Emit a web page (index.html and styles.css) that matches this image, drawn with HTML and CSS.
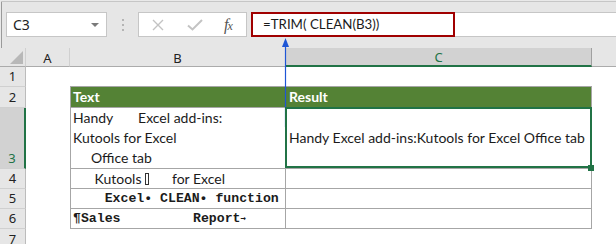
FILE: index.html
```html
<!DOCTYPE html>
<html>
<head>
<meta charset="utf-8">
<link rel="stylesheet" href="styles.css">
</head>
<body>
<div class="app">
  <div class="toolbar">
    <div class="namebox"><span>C3</span><span class="caret"></span></div>
    <div class="grip"><i></i><i></i><i></i></div>
    <div class="btns">
      <svg class="ico-x" width="12" height="12" viewBox="0 0 12 12"><path d="M1 1L11 11M11 1L1 11" stroke="#c3c3c3" stroke-width="1.4" fill="none"/></svg>
      <svg class="ico-ok" width="16" height="12" viewBox="0 0 16 12"><path d="M1 6.5L5.5 10.5L15 1" stroke="#c3c3c3" stroke-width="2" fill="none"/></svg>
      <span class="fx">f<span class="fx-x">x</span></span>
    </div>
    <div class="formula"><div class="hl">=TRIM( CLEAN(B3))</div></div>
  </div>

  <div class="sheet">
    <div class="corner"></div>
    <div class="colh">A</div>
    <div class="colh">B</div>
    <div class="colh colh-sel">C</div>
    <div class="colh colh-end"></div>

    <div class="rowh">1</div>
    <div class="cell"></div>
    <div class="cell tb-top"></div>
    <div class="cell tb-top"></div>
    <div class="cell"></div>

    <div class="rowh">2</div>
    <div class="cell"></div>
    <div class="cell tb tb-l head">Text</div>
    <div class="cell tb head">Result</div>
    <div class="cell"></div>

    <div class="rowh rowh-sel">3</div>
    <div class="cell"></div>
    <div class="cell tb tb-l multi"><span class="ln">Handy       Excel add-ins:</span><span class="ln">Kutools for Excel</span><span class="ln">     Office tab</span></div>
    <div class="cell tb sel">Handy Excel add-ins:Kutools for Excel Office tab</div>
    <div class="cell"></div>

    <div class="rowh">4</div>
    <div class="cell"></div>
    <div class="cell tb tb-l">      Kutools<span class="tofu"></span>      for Excel</div>
    <div class="cell tb"></div>
    <div class="cell"></div>

    <div class="rowh">5</div>
    <div class="cell"></div>
    <div class="cell tb tb-l mono">    Excel• CLEAN• function</div>
    <div class="cell tb"></div>
    <div class="cell"></div>

    <div class="rowh">6</div>
    <div class="cell"></div>
    <div class="cell tb tb-l mono"><span class="tabbed">¶Sales</span>Report<span class="arr">→</span></div>
    <div class="cell tb"></div>
    <div class="cell"></div>

    <div class="rowh rowh-last">7</div>
    <div class="cell"></div>
    <div class="cell"></div>
    <div class="cell"></div>
    <div class="cell"></div>
  </div>

  <svg class="arrow" width="12" height="92" viewBox="0 0 12 92">
    <path d="M5.5 6V90" stroke="#1f56d6" stroke-width="1.2" fill="none"/>
    <path d="M5.5 1L9 10H2Z" fill="#1f56d6"/>
  </svg>
</div>
</body>
</html>
```

FILE: styles.css
```css
* { box-sizing: border-box; margin: 0; padding: 0; }
html, body { width: 616px; height: 244px; overflow: hidden; background: #fff; }
body { font-family: "Lato", "Noto Sans", sans-serif; color: #1b1b1b; }

.app { position: relative; width: 616px; height: 244px; }

/* ---------- toolbar / formula bar ---------- */
.toolbar {
  height: 48px;
  background: #e6e6e6;
  border-top: 1px solid #e9e9e9;
  border-left: 1px solid #e9e9e9;
  box-shadow: inset 0 1px #c6c6c6, inset 1px 0 #9a9a9a;
  padding: 11px 0 0 5px;
  display: flex;
  align-items: flex-start;
}
.namebox {
  width: 101px; height: 25px;
  background: #fff;
  border: 1px solid #c6c6c6;
  display: flex; align-items: center;
  padding-left: 6px;
  font-family: "Noto Sans", sans-serif;
  font-size: 14px;
  color: #222;
}
.caret {
  margin-left: auto; margin-right: 7px;
  width: 0; height: 0;
  border-left: 4px solid transparent;
  border-right: 4px solid transparent;
  border-top: 4px solid #7a7a7a;
}
.grip {
  width: 31px; height: 25px;
  display: flex; flex-direction: column; align-items: center; justify-content: center;
  gap: 3px;
}
.grip i { display: block; width: 2px; height: 2px; background: #b4b4b4; }
.btns {
  width: 109px; height: 25px;
  background: #fff;
  border: 1px solid #c6c6c6;
  display: flex; align-items: center;
  padding-left: 13px;
  margin-right: 4px;
}
.ico-ok { margin-left: 23px; }
.fx {
  margin-left: 21px;
  font-family: "Liberation Serif", serif;
  font-style: italic;
  font-size: 16px;
  color: #555;
  letter-spacing: -1px;
}
.fx-x { font-size: 12px; }
.formula {
  flex: 1; height: 25px;
  background: #fff;
  box-shadow: inset 0 1px #c6c6c6, inset 0 -1px #c6c6c6;
}
.hl {
  width: 204px; height: 25px;
  border: 2px solid #a00000;
  padding-left: 10px;
  font-size: 13.3px;
  line-height: 21px;
  color: #1b1b1b;
  white-space: pre;
}

/* ---------- sheet ---------- */
.sheet {
  display: grid;
  grid-template-columns: 26px 44px 216px 306px 24px;
  grid-template-rows: 19px 20px 21px 61px 20px 20px 20px 20px;
}
.corner {
  background: #e6e6e6;
  border-right: 1px solid #d0d0d0;
  border-bottom: 1px solid #ababab;
  position: relative;
}
.corner::after {
  content: "";
  position: absolute;
  right: 2px; bottom: 2px;
  width: 13px; height: 13px;
  background: #b8b8b8;
  clip-path: polygon(100% 0, 100% 100%, 0 100%);
}
.colh {
  background: #e6e6e6;
  border-right: 1px solid #d0d0d0;
  border-bottom: 1px solid #ababab;
  font-family: "Noto Sans", sans-serif;
  font-size: 13px;
  color: #222;
  display: flex; align-items: center; justify-content: center;
  padding-top: 1px;
}
.colh-sel {
  background: #d2d2d2;
  color: #217346;
  border-right: 1px solid #a0a0a0;
  border-bottom: 2px solid #217346;
}
.colh-end { border-right: none; }
.rowh {
  background: #e6e6e6;
  border-right: 1px solid #bcbcbc;
  border-bottom: 1px solid #d0d0d0;
  font-family: "Noto Sans", sans-serif;
  font-size: 13px;
  color: #222;
  display: flex; align-items: flex-end; justify-content: center;
  line-height: 19px;
}
.rowh-sel {
  background: #d2d2d2;
  color: #217346;
  border-right: 2px solid #217346;
}
.rowh-last { align-items: flex-start; line-height: 16px; padding-top: 2px; }

.cell {
  background: #fff;
  font-size: 14px;
  line-height: 20px;
  white-space: pre;
  padding-left: 3px;
  display: flex; align-items: center;
}
.tb-top { border-bottom: 1px solid #a6a6a6; }
.tb { border-right: 1px solid #a6a6a6; border-bottom: 1px solid #a6a6a6; }
.tb-l { border-left: 1px solid #a6a6a6; padding-left: 2px; }
.head {
  background: #548235;
  color: #fff;
  font-weight: 700;
}
.multi {
  flex-direction: column;
  align-items: flex-start;
  justify-content: flex-end;
}
.ln { display: block; line-height: 20px; }
.sel { position: relative; }
.sel::after {
  content: "";
  position: absolute;
  left: -1px; top: -1px; right: -1px; bottom: 0;
  border: 2px solid #217346;
  z-index: 2;
}
.sel::before {
  content: "";
  position: absolute;
  right: -3px; bottom: -3px;
  width: 6px; height: 6px;
  background: #217346;
  z-index: 3;
}
.tofu {
  display: inline-block;
  width: 4px; height: 12px;
  border: 1px solid #333;
  margin-left: 4px;
  margin-right: 1px;
}
.mono {
  font-family: "Liberation Mono", monospace;
  font-weight: 700;
  font-size: 13.2px;
}
.tabbed { display: inline-block; width: 120px; }
.arr { font-family: "DejaVu Sans Mono", monospace; font-size: 9px; font-weight: 700; position: relative; top: -1px; }

.arrow { position: absolute; left: 280px; top: 37px; }
```
